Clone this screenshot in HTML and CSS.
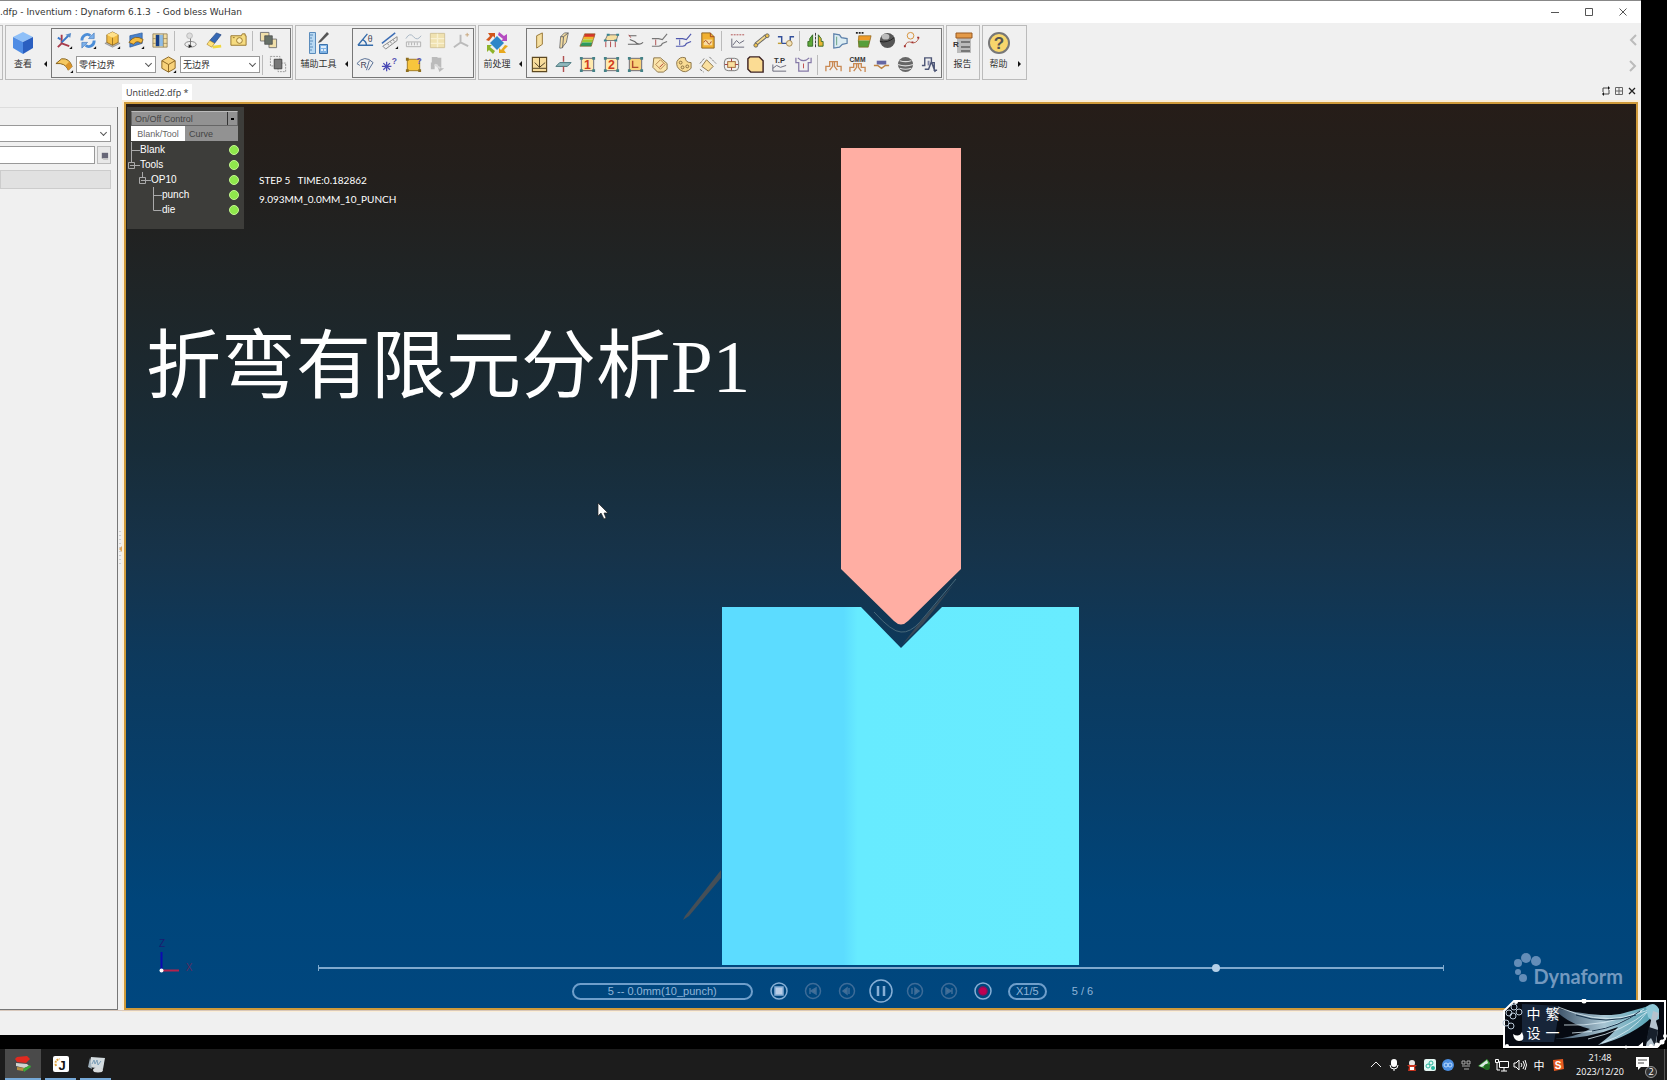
FILE: index.html
```html
<!DOCTYPE html>
<html lang="zh-CN">
<head>
    <meta charset="UTF-8">
    <meta name="viewport" content="width=device-width, initial-scale=1.0">
    <title>Inventium : Dynaform 6.1.3</title>
    <link rel="stylesheet" href="styles.css">
</head>
<body>
    <div class="window">
        <header class="titlebar">
            <span class="title">.dfp - Inventium : Dynaform 6.1.3 &nbsp;- God bless WuHan</span>
            <div class="window-buttons">
                <button aria-label="Minimize"><svg viewBox="0 0 10 10"><path d="M1 5.5h8" stroke="#555"/></svg></button>
                <button aria-label="Maximize"><svg viewBox="0 0 10 10"><path d="M1.5 1.5h7v7h-7z" stroke="#555"/></svg></button>
                <button aria-label="Close"><svg viewBox="0 0 10 10"><path d="M1.5 1.5l7 7m0-7l-7 7" stroke="#555"/></svg></button>
            </div>
        </header>

        <div class="toolbar">
            <section class="group group-cut"></section>

            <!-- view -->
            <section class="group">
                <button class="big-button">
                    <svg viewBox="0 0 24 24"><path d="M12 1l10 5-10 5L2 6z" fill="#8fc0f8"/><path d="M2 6l10 5v12L2 17z" fill="#4f8ce4"/><path d="M22 6l-10 5v12l10-6z" fill="#2a5fc0"/></svg>
                    查看
                </button>
                <button class="arrow arrow-left" aria-label="Collapse"></button>
                <div class="box">
                    <div class="icon-row">
                        <button class="icon" aria-label="Orientation"><svg viewBox="0 0 20 20"><path d="M7 4v9l-4 4M7 13l8 3" stroke="#a83c4c" stroke-width="2"/><path d="M7 12l7-7M3 7l3 2" stroke="#3a78c8" stroke-width="2"/><path d="M11 4l6-2-1 5z" fill="#5a8cc8"/><path d="M18 19v-3l-3 3z" fill="#111"/></svg></button>
                        <button class="icon" aria-label="Rotate"><svg viewBox="0 0 20 20"><path d="M3 10c0-6 6-8 9-5M16 10c0 6-6 8-9 5" stroke="#4c8ed8" stroke-width="3"/><path d="M10 8h6V2zM9 12H3v6z" fill="#7db2ec" stroke="#2c68b4" stroke-width=".6"/><path d="M18 19v-3l-3 3z" fill="#111"/></svg></button>
                        <button class="icon" aria-label="Solid view"><svg viewBox="0 0 20 20"><path d="M2 13l7-3 9 3-8 4z" fill="#b8b8b8" stroke="#777" stroke-width=".6"/><path d="M10 1l6 3v8l-6 3-6-3V4z" fill="#f2bd45" stroke="#85601a" stroke-width=".8"/><path d="M4 4l6 3 6-3-6-3z" fill="#ffe18a"/><path d="M10 7v8" stroke="#85601a" stroke-width=".8"/><path d="M18 19v-3l-3 3z" fill="#111"/></svg></button>
                        <button class="icon" aria-label="Section"><svg viewBox="0 0 20 20"><path d="M3 5l13-3v11L3 17z" fill="#4a83cc" stroke="#24549a" stroke-width=".7"/><path d="M2 12q6-9 15-3l-2 4q-5-4-8 1z" fill="#f6bd42" stroke="#7c5414" stroke-width=".8"/><path d="M18 19v-3l-3 3z" fill="#111"/></svg></button>
                        <button class="icon" aria-label="Shading"><svg viewBox="0 0 20 20"><path d="M2 3h15v14H2z" fill="#f2dca0" stroke="#8a7850" stroke-width=".8"/><path d="M5 4h4v12H5z" fill="#173f86"/><path d="M9 4h4v12H9z" fill="#8ebce6"/><path d="M2 8h3M2 13h3M13 8h4M13 13h4M13 3v14" stroke="#8a7850" stroke-width=".7"/></svg></button>
                        <span class="sep"></span>
                        <button class="icon" aria-label="Locate"><svg viewBox="0 0 20 20"><ellipse cx="10" cy="14" rx="6" ry="3" stroke="#888"/><circle cx="9" cy="5" r="3" fill="#ddd" stroke="#bbb"/><path d="M10 8v7" stroke="#777"/><path d="M8 14l4 2-4 2z" fill="#222"/></svg></button>
                        <button class="icon" aria-label="Erase"><svg viewBox="0 0 20 20"><path d="M8 17l9-1" stroke="#f0d840" stroke-width="3"/><path d="M12 2l5 2-7 9-5-3z" fill="#3568b4" stroke="#1f417c" stroke-width=".7"/><path d="M5 10l5 3-3 4-5-3z" fill="#ffe27a" stroke="#a07820" stroke-width=".6"/></svg></button>
                        <button class="icon" aria-label="Snapshot"><svg viewBox="0 0 20 20"><path d="M2 5h11l1-2h3v2h1v10H2z" fill="#f6dc80" stroke="#98762c"/><circle cx="11" cy="10" r="3" fill="#fff0b8" stroke="#98762c"/><path d="M4 7h2" stroke="#98762c"/></svg></button>
                        <span class="sep"></span>
                        <button class="icon" aria-label="Layers"><svg viewBox="0 0 20 20"><path d="M1.500 1.500h9v9h-9z" fill="#f0dfaa" stroke="#777"/><path d="M10.500 8.500h8v9h-8z" fill="#f0dfaa" stroke="#777"/><path d="M6 5h8v9H6z" fill="#667067" stroke="#444" stroke-width=".7"/></svg></button>
                    </div>
                    <div class="icon-row">
                        <button class="icon" aria-label="Surface"><svg viewBox="0 0 20 20"><path d="M1 9l6-5q8-1 11 8l-4 4q-3-8-13-7z" fill="#f5c860" stroke="#85601a"/><path d="M18 12l-4 4q-1-3-3-5l4-4z" fill="#dc9428"/><path d="M19 19v-3l-3 3z" fill="#111"/></svg></button>
                        <label class="combo"><select aria-label="Part boundary"><option>零件边界</option></select></label>
                        <button class="icon" aria-label="Wire box"><svg viewBox="0 0 20 20"><path d="M10 2l7 4v8l-7 4-7-4V6z" fill="#f8d27a" stroke="#8a6420"/><path d="M3 6l7 4 7-4M10 10v8" stroke="#8a6420"/><path d="M18 19v-3l-3 3z" fill="#111"/></svg></button>
                        <label class="combo"><select aria-label="Boundary"><option>无边界</option></select></label>
                        <span class="sep"></span>
                        <button class="icon" aria-label="Hidden layers"><svg viewBox="0 0 20 20"><path d="M1.500 1.500h10v10h-10zM9.500 8.500h8v9h-8z" stroke="#999" stroke-dasharray="2 1"/><path d="M5.500 4.500h8v10h-8z" fill="#777" stroke="#444"/></svg></button>
                    </div>
                </div>
            </section>

            <!-- auxiliary tools -->
            <section class="group">
                <button class="big-button big-wide">
                    <svg viewBox="0 0 24 24"><path d="M2.500 1.500h6v21h-6z" fill="#b8d8f2" stroke="#5b8cbc"/><path d="M3 4h3M3 7h2M3 10h3M3 13h2M3 16h3M3 19h2" stroke="#5b8cbc"/><path d="M12 10l8-9 2 2-8 8-3 1z" fill="#555"/><path d="M12.500 13.500h8v9h-8z" fill="#7eb2e4" stroke="#3c72ac"/><path d="M14 16h5M14 19h2m1 0h2" stroke="#fff" stroke-width="1.500"/></svg>
                    辅助工具
                </button>
                <button class="arrow arrow-left" aria-label="Collapse"></button>
                <div class="box">
                    <div class="icon-row">
                        <button class="icon" aria-label="Angle"><svg viewBox="0 0 20 20"><path d="M2 15L12 3M2 15h16M7 9q4 2 4 6" stroke="#356cab" stroke-width="1.400"/><text x="15" y="12" class="mark">θ</text></svg></button>
                        <button class="icon" aria-label="Distance"><svg viewBox="0 0 20 20"><path d="M2 13L16 2" stroke="#3b6cb4" stroke-width="1.500"/><path d="M3 16L18 6v4L6 19z" stroke="#888"/><path d="M8 13l1 2m2-4l1 2m2-4l1 2" stroke="#888"/><path d="M19 19v-3l-3 3z" fill="#111"/></svg></button>
                        <button class="icon dim" aria-label="Curve length"><svg viewBox="0 0 20 20"><path d="M2 8q4-7 8-2t8-1" stroke="#7890a8"/><path d="M2.500 11.500h15v5h-15z" stroke="#888"/><path d="M5 12v3m3-3v3m3-3v3m3-3v3" stroke="#888"/></svg></button>
                        <button class="icon dim" aria-label="Area"><svg viewBox="0 0 20 20"><path d="M2.500 2.500h15v15h-15z" fill="#f0d988" stroke="#c0a860"/><path d="M10 3v14M3 8h14M3 13h14" stroke="#fff2c0" stroke-width="1.500"/></svg></button>
                        <button class="icon dim" aria-label="Axis"><svg viewBox="0 0 20 20"><path d="M9 4v8l-7 5M9 12l8 4" stroke="#999" stroke-width="2"/><path d="M14 4h4m-2-2v4" stroke="#b07830"/></svg></button>
                    </div>
                    <div class="icon-row">
                        <button class="icon" aria-label="Radius"><svg viewBox="0 0 20 20"><path d="M1 9q8-10 17-1M1 9l3 2M13 16l5-8" stroke="#536b91"/><path d="M11 16l3-10" stroke="#536b91"/><text x="8" y="14" class="mark">R</text></svg></button>
                        <button class="icon" aria-label="Node query"><svg viewBox="0 0 20 20"><path d="M7 7v10M2 12h10M3.500 8.500l7 7m0-7l-7 7" stroke="#4949b5" stroke-width="1.300"/><text x="15" y="9" class="mark mark-blue">?</text></svg></button>
                        <button class="icon" aria-label="Element query"><svg viewBox="0 0 20 20"><path d="M3.500 4.500h13v12h-13z" fill="#f8c53c" stroke="#a07820"/><path d="M2 3h3v3H2zm0 12h3v3H2zm13 0h3v3h-3z" fill="#8e6f20"/><text x="16" y="9" class="mark mark-blue">?</text></svg></button>
                        <button class="icon dim" aria-label="Part query"><svg viewBox="0 0 20 20"><path d="M4 2h6v8H7v5H3V8h1zM10 3h4v11h3l-5 4-2-6z" fill="#999"/><path d="M7 10l6 4" stroke="#ccc" stroke-width="2"/></svg></button>
                    </div>
                </div>
            </section>

            <!-- pre-processing -->
            <section class="group">
                <button class="big-button big-mid">
                    <svg viewBox="0 0 24 24"><path d="M12 5l7 7-7 7-7-7z" fill="#2e86c8"/><path d="M1 9l4-4-2-3h7v5L8 5 4 10z" fill="#d2561c"/><path d="M14 1l5 4 3-2v7h-6l2-2-5-4z" fill="#b54cc0"/><path d="M23 15l-4 4 2 3h-7v-5l2 2 4-5z" fill="#e8a91e"/><path d="M2 21v-7h5l-2 2 5 4-2 3-4-4z" fill="#8eb32a"/></svg>
                    前处理
                </button>
                <button class="arrow arrow-left" aria-label="Collapse"></button>
                <div class="box">
                    <div class="icon-row">
                        <button class="icon" aria-label="Sheet"><svg viewBox="0 0 20 20"><path d="M7 5l6-3v12l-6 4z" fill="#f6dfa0" stroke="#967535"/></svg></button>
                        <button class="icon" aria-label="Bend sheet"><svg viewBox="0 0 20 20"><path d="M7 6l4-4h4l-2 10-5 6H6z" fill="#f3dba0" stroke="#777"/><path d="M7 6h3l-1 12M10 6l5-4" stroke="#666"/></svg></button>
                        <button class="icon" aria-label="Contour"><svg viewBox="0 0 20 20"><path d="M7 3h11l-1 4H6z" fill="#d9342b"/><path d="M6 6h11l-1 3H5z" fill="#f0b32c"/><path d="M5 9h11l-1 3H4z" fill="#9acb36"/><path d="M4 12h11l-1 4H2z" fill="#2c9a60"/><path d="M7 3h11l-4 13H2z" stroke="#8b5a20" stroke-width=".7"/></svg></button>
                        <button class="icon" aria-label="Mesh points"><svg viewBox="0 0 20 20"><path d="M6 4h11l-2 6H3z" fill="#f6dfa0" stroke="#777"/><path d="M4 11v6m5-6v6m5-6v6" stroke="#b24848"/><path d="M5 3h3v2H5zm10 0h3v2h-3zM2 9h3v2H2zm11 0h3v2h-3z" fill="#37848e"/></svg></button>
                        <button class="icon" aria-label="Tipping"><svg viewBox="0 0 20 20"><path d="M3 5h8M4 9l5 2q4 5 9 1M2 14h12" stroke="#666" stroke-width="1.200"/><path d="M3 4l2 3" stroke="#b24848"/></svg></button>
                        <button class="icon" aria-label="Draw curve"><svg viewBox="0 0 20 20"><path d="M2 8h7l4 1 5-6M2 16h7q3 0 4-3l5-2" stroke="#777" stroke-width="1.200"/><path d="M6 9v6" stroke="#b05050"/></svg></button>
                        <button class="icon" aria-label="Blank curve"><svg viewBox="0 0 20 20"><path d="M2 8h7l4 1 5-6M2 16h7q3 0 4-3l5-2" stroke="#4f58ae" stroke-width="1.200"/><path d="M6 9v6" stroke="#4f58ae"/></svg></button>
                        <button class="icon" aria-label="Report file"><svg viewBox="0 0 20 20"><path d="M4 2h9l4 4v12H4z" fill="#f0b030" stroke="#8c6420"/><path d="M6 9h9v6H6z" fill="#f8dca0"/><path d="M13 2v4h4M6 12q2-4 4 0t4-1" stroke="#a54420"/></svg></button>
                        <span class="sep"></span>
                        <button class="icon" aria-label="Forming window"><svg viewBox="0 0 20 20"><path d="M3 4h15" stroke="#b05050" stroke-dasharray="2 1"/><path d="M4 8v9h13M5 15l4-5 3 3 5-3" stroke="#667"/></svg></button>
                        <button class="icon" aria-label="Link"><svg viewBox="0 0 20 20"><path d="M4 14L15 5" stroke="#666" stroke-width="4"/><path d="M4 14L15 5" stroke="#f3d88a" stroke-width="2"/><circle cx="4" cy="15" r="2" fill="#f0c24a" stroke="#666"/><circle cx="16" cy="5" r="2" fill="#f0c24a" stroke="#666"/></svg></button>
                        <button class="icon" aria-label="Drawbead"><svg viewBox="0 0 20 20"><path d="M2 6h4v7h9V6h4" stroke="#33509b" stroke-width="1.500"/><path d="M2 13h4" stroke="#c3a036" stroke-width="1.500"/><circle cx="14" cy="13" r="3" fill="#f3e3b8" stroke="#a88850"/></svg></button>
                        <span class="sep"></span>
                        <button class="icon" aria-label="Mirror"><svg viewBox="0 0 20 20"><path d="M2 16v-5h2V8l3-4v12z" fill="#5eaa39" stroke="#376b26"/><path d="M18 16v-5h-2V8l-3-4v12z" fill="#e9b734" stroke="#376b26"/><path d="M10 2v16" stroke="#333" stroke-dasharray="3 1"/></svg></button>
                        <button class="icon" aria-label="Fill"><svg viewBox="0 0 20 20"><path d="M4 3l6 1 2 3 6 1v5l-5 1-3 3-6 1z" fill="#dcecf2" stroke="#5c80aa" stroke-width="1.300"/><path d="M7 6v9" stroke="#65a080"/></svg></button>
                        <button class="icon" aria-label="Thickness"><svg viewBox="0 0 20 20"><path d="M2 2h9" stroke="#222" stroke-width="2" stroke-dasharray="2 1"/><path d="M5 5h13l-1 5H4z" fill="#ef9b28"/><path d="M4 10h13l-2 7H5z" fill="#579e3a"/><path d="M5 5h13l-3 12H5z" stroke="#856020" stroke-width=".7"/></svg></button>
                        <button class="icon" aria-label="Sphere"><svg viewBox="0 0 20 20"><circle cx="10" cy="10" r="8" fill="#555"/><ellipse cx="8" cy="6" rx="4" ry="3" fill="#bbb"/><path d="M2 11q8 2 15-4" stroke="#222"/></svg></button>
                        <button class="icon" aria-label="Trajectory"><svg viewBox="0 0 20 20"><circle cx="9" cy="5" r="3.500" stroke="#d69038"/><path d="M3 16q2-6 7-4t8-5" stroke="#b05d48"/><path d="M2 15h2v2H2zm8-4h2v2h-2zm6-5h2v2h-2z" fill="#a43030"/></svg></button>
                    </div>
                    <div class="icon-row">
                        <button class="icon" aria-label="Project"><svg viewBox="0 0 20 20"><path d="M2.500 2.500h15v15h-15z" fill="#f7dc9b" stroke="#5d4820" stroke-width="1.200"/><path d="M3 14h14M10 3v10M5 8l5 5 6-5" stroke="#4b3b20"/></svg></button>
                        <button class="icon" aria-label="Plane"><svg viewBox="0 0 20 20"><path d="M2 12l4-4h12l-4 4z" fill="#90b8bd" stroke="#46747a"/><path d="M10 1v6m0 5v6" stroke="#b05050" stroke-width="1.500"/></svg></button>
                        <button class="icon" aria-label="Step one"><svg viewBox="0 0 20 20"><path d="M3.500 3.500h13v13h-13z" fill="#ffe9ad" stroke="#667"/><path d="M2 2h3v3H2zm13 0h3v3h-3zM2 15h3v3H2zm13 0h3v3h-3z" fill="#448287"/><text x="10" y="15" class="digit">1</text></svg></button>
                        <button class="icon" aria-label="Step two"><svg viewBox="0 0 20 20"><path d="M3.500 3.500h13v13h-13z" fill="#ffe9ad" stroke="#667"/><path d="M2 2h3v3H2zm13 0h3v3h-3zM2 15h3v3H2zm13 0h3v3h-3z" fill="#448287"/><text x="10" y="15" class="digit">2</text></svg></button>
                        <button class="icon" aria-label="Local axis"><svg viewBox="0 0 20 20"><path d="M3.500 3.500h13v13h-13z" fill="#f9d278" stroke="#667"/><path d="M2 2h3v3H2zm13 0h3v3h-3zM2 15h3v3H2zm13 0h3v3h-3z" fill="#448287"/><path d="M7 6v7h6" stroke="#b04a2c" stroke-width="1.500"/></svg></button>
                        <button class="icon" aria-label="Outline"><svg viewBox="0 0 20 20"><path d="M4 3h7l7 6v6l-4 3H8l-5-5z" fill="#fae4aa" stroke="#8b7448"/><path d="M6 10l5-5 5 5-5 5z" stroke="#b58550"/><path d="M10 13l4-4" stroke="#b03c30"/></svg></button>
                        <button class="icon" aria-label="Holes"><svg viewBox="0 0 20 20"><path d="M3 7q3-6 9-4 0 5 6 5v6q-6 6-11 2-5-3-4-9z" fill="#f8db93" stroke="#8b7448"/><circle cx="7" cy="8" r="1.500" stroke="#876c3c"/><circle cx="9" cy="13" r="1.500" stroke="#876c3c"/><circle cx="14" cy="12" r="1.500" stroke="#876c3c"/></svg></button>
                        <button class="icon" aria-label="Trim"><svg viewBox="0 0 20 20"><path d="M9 5l7 7-5 5-7-5z" fill="#fae0a0" stroke="#8b7448"/><path d="M2 9l5-6m5-1l7 7M2 15l4 3" stroke="#777" stroke-dasharray="3 1"/></svg></button>
                        <button class="icon" aria-label="Offset"><svg viewBox="0 0 20 20"><rect x="2.500" y="3.500" width="15" height="13" rx="4" stroke="#777"/><rect x="6" y="7" width="8" height="6" fill="#fae0a0" stroke="#a06838"/><path d="M10 4v3m0 6v3M3 10h3m8 0h3" stroke="#a03c3c"/></svg></button>
                        <button class="icon" aria-label="Blank outline"><svg viewBox="0 0 20 20"><path d="M4 2h10l4 4v12H5l-3-3V4z" fill="#fbdc94" stroke="#3c2222" stroke-width="1.500"/></svg></button>
                        <button class="icon" aria-label="Trim path"><svg viewBox="0 0 20 20"><text x="10" y="8" class="caps">T.P</text><path d="M3 10v7h14M3 14l4-3 4 2 6-2" stroke="#667"/></svg></button>
                        <button class="icon" aria-label="Springback"><svg viewBox="0 0 20 20"><path d="M2 3v5h3v9h10V8h3V3M4 3q6 6 12 0" stroke="#8579a7" stroke-width="1.300"/><path d="M10 9v5" stroke="#bf4b4b"/></svg></button>
                        <span class="sep"></span>
                        <button class="icon" aria-label="Tool offset"><svg viewBox="0 0 20 20"><path d="M2 17v-5h4V7h8v5h4v5M6 16l3-4v-5m2 0v5l3 4" stroke="#c98953" stroke-width="1.400"/></svg></button>
                        <button class="icon" aria-label="CMM"><svg viewBox="0 0 20 20"><text x="10" y="7" class="caps caps-small">CMM</text><path d="M2 18v-5h4V9h8v4h4v5M6 17l3-4V9m2 0v4l3 4" stroke="#c98953" stroke-width="1.400"/></svg></button>
                        <button class="icon" aria-label="Press"><svg viewBox="0 0 20 20"><path d="M5 6h10v4H5z" fill="#6667a3"/><path d="M2 11h4l4 3 4-3h4" stroke="#be8342" stroke-width="1.500"/></svg></button>
                        <button class="icon" aria-label="Zebra"><svg viewBox="0 0 20 20"><circle cx="10" cy="10" r="8" fill="#666"/><path d="M4 6q6 2 12 0M2 10q8 3 16 0M4 14q6 2 12 0" stroke="#ddd" stroke-width="1.200"/></svg></button>
                        <button class="icon" aria-label="Analysis"><svg viewBox="0 0 20 20"><path d="M2 11h3V3h7v5h3v8h3M5 15h4l3-8 4 11" stroke="#4d5676" stroke-width="1.500"/><path d="M8 6h2v5H8z" fill="#8085a5"/></svg></button>
                    </div>
                </div>
            </section>

            <!-- report -->
            <section class="group">
                <button class="big-button big-slim">
                    <svg viewBox="0 0 24 24"><path d="M6 3h14v19H6z" fill="#bbb"/><path d="M5 2h16v5H5z" fill="#e49a48" stroke="#995b22"/><path d="M10 11h9M10 16h9M10 20h9" stroke="#777" stroke-width="2"/><text x="5" y="16" class="caps">R</text></svg>
                    报告
                </button>
            </section>

            <!-- help -->
            <section class="group">
                <button class="big-button big-slim">
                    <svg viewBox="0 0 24 24"><circle cx="12" cy="12" r="10" fill="#f8d66c" stroke="#777" stroke-width="2"/><text x="12" y="18" class="help-mark">?</text></svg>
                    帮助
                </button>
                <button class="arrow arrow-right" aria-label="Expand"></button>
            </section>

            <div class="toolbar-scroll">
                <button aria-label="Scroll left"><svg viewBox="0 0 10 12"><path d="M8 1L3 6l5 5" stroke="#bbb" stroke-width="2"/></svg></button>
                <button aria-label="Scroll right"><svg viewBox="0 0 10 12"><path d="M2 1l5 5-5 5" stroke="#bbb" stroke-width="2"/></svg></button>
            </div>
        </div>

        <div class="tabbar">
            <button class="tab">Untitled2.dfp *</button>
            <div class="tab-tools">
                <button aria-label="Swap view"><svg viewBox="0 0 10 10"><path d="M2 6V2h6M8 4v4H2" stroke="#444"/><path d="M7 0l2 2-2 2zM3 6L1 8l2 2z" fill="#111"/></svg></button>
                <button aria-label="Tile"><svg viewBox="0 0 10 10"><path d="M1.500 1.500h7v7h-7zM5 1v8M1 5h8" stroke="#666"/></svg></button>
                <button aria-label="Close tab"><svg viewBox="0 0 10 10"><path d="M2 2l6 6m0-6L2 8" stroke="#222" stroke-width="1.300"/></svg></button>
            </div>
        </div>

        <main class="workspace">
            <aside class="side-panel">
                <label class="combo side-combo"><select aria-label="Category"><option></option></select></label>
                <div class="side-search">
                    <input type="text" aria-label="Filter">
                    <button aria-label="Pick"><svg viewBox="0 0 10 10"><path d="M2 2h7v6H2z" fill="#667"/><path d="M2 8l2 1h5" stroke="#aaa"/></svg></button>
                </div>
                <div class="side-header"></div>
            </aside>
            <div class="splitter"><svg viewBox="0 0 6 40"><path d="M2 2v36M5 4v34" stroke="#aaa" stroke-dasharray="1 3"/><path d="M5 16v8L1 20z" fill="#e0a860"/></svg></div>

            <div class="viewport">
                <svg class="scene" viewBox="0 0 1510 904">
                    <defs>
                        <linearGradient id="die-shade">
                            <stop offset=".34" stop-color="#5cdcff"/>
                            <stop offset=".38" stop-color="#67ebff"/>
                            <stop offset="1" stop-color="#68ecff"/>
                        </linearGradient>
                    </defs>
                    <!-- sheet metal part -->
                    <path d="M595 766l-36 46-2 4 6-4 32-38z" fill="#454f57"/>
                    <!-- die and punch -->
                    <path d="M596 503h139l40 41 41-41h137v358H596z" fill="url(#die-shade)"/>
                    <path d="M715 44h120v421l-53 52q-7 7-14 0l-53-52z" fill="#ffaea3"/>
                    <path d="M748 508q18 20 27 20 9 1 19-10l36-43" stroke="#47687a"/>
                    <path d="M776 541l18-23 34-38-31 40z" fill="#394957"/>
                    <!-- mouse pointer -->
                    <path d="M472 399v13l3-3 3 6 2-1-2-5h4z" fill="#fff" stroke="#222" stroke-width=".7"/>
                </svg>

                <div class="hud">
                    <div class="hud-top">
                        <div class="control-panel">
                            <div class="control-title"><select aria-label="Panel"><option>On/Off Control</option></select></div>
                            <div class="control-tabs">
                                <button class="active">Blank/Tool</button>
                                <button>Curve</button>
                            </div>
                            <ul class="tree">
                                <li><svg width="12" height="15"><path d="M3.500 0v15M4 8.500h8"/></svg>Blank<button class="dot" aria-label="Toggle Blank"></button></li>
                                <li><svg width="12" height="15"><path d="M3.500 0v5M.500 5.500h6v6h-6zM2 8.500h10"/></svg>Tools<button class="dot" aria-label="Toggle Tools"></button></li>
                                <li><svg width="23" height="15"><path d="M14.500 0v5M11.500 5.500h6v6h-6zM13 8.500h10"/></svg>OP10<button class="dot" aria-label="Toggle OP10"></button></li>
                                <li><svg width="34" height="15"><path d="M25.500 0v15M26 8.500h8"/></svg>punch<button class="dot" aria-label="Toggle punch"></button></li>
                                <li><svg width="34" height="15"><path d="M25.500 0v8.500h8"/></svg>die<button class="dot" aria-label="Toggle die"></button></li>
                            </ul>
                        </div>
                        <div class="step-info">
                            <p>STEP 5 &nbsp; TIME:0.182862</p>
                            <p>9.093MM_0.0MM_10_PUNCH</p>
                        </div>
                    </div>

                    <h1 class="caption">折弯有限元分析P1</h1>

                    <div class="hud-bottom">
                        <svg class="triad" viewBox="0 0 40 36"><text x="7" y="9" class="axis-z">Z</text><path d="M6.500 14v18" stroke="#0b0bb0" stroke-width="2"/><path d="M8 32.500h16" stroke="#b4224c" stroke-width="2"/><text x="34" y="33" class="axis-x">X</text><circle cx="6.500" cy="32.500" r="2" fill="#fff"/></svg>
                        <div class="player">
                            <input type="range" class="timeline" min="1" max="6" value="5" aria-label="Step">
                            <div class="player-buttons">
                                <button class="pill pill-name">5 -- 0.0mm(10_punch)</button>
                                <button class="round" aria-label="Stop"><svg viewBox="0 0 18 18"><circle cx="9" cy="9" r="8"/><path d="M5 5h8v8H5z" fill="#b9cde6"/></svg></button>
                                <button class="round faded" aria-label="First"><svg viewBox="0 0 18 18"><circle cx="9" cy="9" r="7.500"/><path d="M6 6v6m1-3l5-3v6z" fill="#4a7296"/></svg></button>
                                <button class="round faded" aria-label="Previous"><svg viewBox="0 0 18 18"><circle cx="9" cy="9" r="7.500"/><path d="M5 9l4-3v6zm6-3v6" fill="#4a7296"/></svg></button>
                                <button class="round play" aria-label="Pause"><svg viewBox="0 0 24 24"><circle cx="12" cy="12" r="11"/><path d="M9 7v10m6-10v10" stroke-width="2.500"/></svg></button>
                                <button class="round faded" aria-label="Next"><svg viewBox="0 0 18 18"><circle cx="9" cy="9" r="7.500"/><path d="M13 9L9 6v6zM6 6v6" fill="#4a7296"/></svg></button>
                                <button class="round faded" aria-label="Last"><svg viewBox="0 0 18 18"><circle cx="9" cy="9" r="7.500"/><path d="M12 6v6m-1-3L6 6v6z" fill="#4a7296"/></svg></button>
                                <button class="round" aria-label="Record"><svg viewBox="0 0 18 18"><circle cx="9" cy="9" r="8"/><circle cx="9" cy="9" r="4" fill="#c00052" stroke="#8c1058"/></svg></button>
                                <button class="pill pill-speed">X1/5</button>
                                <span class="frame">5 / 6</span>
                            </div>
                        </div>
                        <div class="brand">
                            <svg viewBox="0 0 28 30"><circle cx="12" cy="5" r="5"/><circle cx="22" cy="8" r="5"/><circle cx="4" cy="10" r="4"/><circle cx="4" cy="19" r="3"/><circle cx="9" cy="25" r="4"/></svg>
                            <span>Dynaform</span>
                        </div>
                    </div>
                </div>
            </div>
        </main>
        <footer class="statusbar"></footer>
    </div>

    <div class="ime">
        <svg viewBox="0 0 165 50">
            <defs>
                <linearGradient id="hair"><stop offset="0" stop-color="#32475e"/><stop offset=".5" stop-color="#a7c4d2"/><stop offset="1" stop-color="#4fa2b4"/></linearGradient>
            </defs>
            <path d="M12 2h151v38l-8 8H2V12z" fill="#060a12" stroke="#fff" stroke-width="2"/>
            <path d="M20 5l38 2-6 36H20z" fill="#20304a" opacity=".7"/>
            <path d="M50 8q50 12 72 6t28-8l4 8q-20 22-58 32 14-10 20-18-30 12-64 12 22-2 36-10-24-6-38-22z" fill="url(#hair)"/>
            <path d="M56 8q38 16 66 10t30-12M70 34q38 0 72-24M86 40q36-8 60-28M62 26q40 2 78-14M100 44q30-10 46-32" stroke="#dcecf4" stroke-width=".8"/>
            <path d="M74 16q30 10 60 0M90 32q28-4 48-20" stroke="#17324a"/>
            <path d="M144 8q8-7 13 2v10l-6 3-5-5z" fill="#8fc8d8"/>
            <path d="M151 12l6 2-3 8 2 7-2 18h-10l3-16z" fill="#b5c3ce"/>
            <path d="M147 28l-3 16 5-5 4 8 3-16z" fill="#17202c"/>
            <g stroke="#b7c7d6"><circle cx="12" cy="8" r="3"/><circle cx="7" cy="14" r="3"/><circle cx="17" cy="13" r="3"/><circle cx="11" cy="17" r="3"/><circle cx="4" cy="24" r="3"/><circle cx="9" cy="27" r="3"/></g>
            <path d="M11 35q6 4 9-2 4 9-3 9-5 0-6-7z" fill="#fff"/>
            <g fill="#fff"><circle cx="82" cy="2" r="2.500"/><circle cx="14" cy="3" r="2"/><circle cx="5" cy="47" r="2"/><circle cx="155" cy="46" r="2.500"/><circle cx="160" cy="43" r="2.500"/><circle cx="163" cy="37" r="2"/><circle cx="149" cy="47" r="2"/><circle cx="124" cy="48" r="1.500"/><path d="M134 49l7-6v6z"/></g>
        </svg>
        <div class="ime-keys">
            <button>中</button><button>繁</button>
            <button>设</button><button>一</button>
        </div>
    </div>

    <nav class="taskbar">
        <button class="task active" aria-label="Dynaform"><svg viewBox="0 0 18 18"><path d="M3 2l10-1 3 3-4 4-9-1-2-3z" fill="#e02a20"/><path d="M2 8l11 1 2 2-5 2-8-2z" fill="#d0d4d0"/><path d="M3 12l8 1-2 3-6-1z" fill="#b58c42"/><path d="M9 14l7-4 1 2-7 5z" fill="#38a838"/></svg></button>
        <button class="task" aria-label="Jump"><svg viewBox="0 0 18 18"><rect x="1" y="1" width="16" height="16" rx="2" fill="#fff"/><text x="10" y="15" class="task-letter">J</text><path d="M4 11q-2-6 4-7" stroke="#e1a33c" stroke-width="2" stroke-dasharray="2 1"/></svg></button>
        <button class="task" aria-label="Monitor"><svg viewBox="0 0 18 18"><path d="M4 2l14 1-2 11-14-2z" fill="#d4dce0"/><path d="M5 9l2-4 1 4 2-4 1 5 3-4" stroke="#7d9fb8"/><ellipse cx="11" cy="15" rx="5" ry="2.500" fill="#d8dcde"/><path d="M3 3l-2 9 4 2z" fill="#9eb0bc"/></svg></button>

        <div class="tray">
            <button aria-label="More"><svg viewBox="0 0 14 14"><path d="M2 9l5-5 5 5" stroke="#eee"/></svg></button>
            <button aria-label="Microphone"><svg viewBox="0 0 14 14"><rect x="4" y="1" width="6" height="8" rx="3" fill="#fff"/><path d="M3 7q0 4 4 4t4-4M7 11v2" stroke="#fff"/></svg></button>
            <button aria-label="Messenger"><svg viewBox="0 0 14 14"><circle cx="7" cy="5" r="3" fill="#e8e8e8"/><path d="M2 7h10l-2 2 1 4H3l1-4z" fill="#c8341f"/><path d="M5 9h4v3H5z" fill="#fff"/></svg></button>
            <button aria-label="Share"><svg viewBox="0 0 14 14"><rect x="1" y="1" width="12" height="12" rx="2" fill="#e4f6f3"/><circle cx="5" cy="8" r="2" stroke="#26b49c"/><circle cx="8" cy="5" r="2" stroke="#26b49c"/><circle cx="10" cy="10" r="2" fill="#26b49c"/></svg></button>
            <button aria-label="Bluetooth"><svg viewBox="0 0 14 14"><circle cx="7" cy="7" r="6" fill="#4b8ee0"/><circle cx="5" cy="7" r="2" stroke="#b9d9ff"/><circle cx="9" cy="7" r="2" stroke="#b9d9ff"/></svg></button>
            <button aria-label="Keyboard"><svg viewBox="0 0 14 14"><path d="M3 3h3v3H3zm5 0h3v3H8zM3 8h8M5 11h5" stroke="#aaa"/></svg></button>
            <button aria-label="Download"><svg viewBox="0 0 14 14"><path d="M1 8l9-7 3 4-2 7-5-2z" fill="#3aa238"/><path d="M2 8l8-6 1 3-6 4z" fill="#dce8e4"/><circle cx="10" cy="9" r="3" fill="#206820"/></svg></button>
            <button aria-label="Network"><svg viewBox="0 0 14 14"><path d="M4.500 3.500h9v6h-9zM9 10v3m-3 0h6M.500 1.500h3v3h-3zM2 5v7h3" stroke="#fff"/></svg></button>
            <button aria-label="Volume"><svg viewBox="0 0 14 14"><path d="M1 5h2l3-3v10L3 9H1zM8 5q2 2 0 4M10 3q3 4 0 8M12 2q3 5 0 10" stroke="#fff"/></svg></button>
            <button class="lang">中</button>
            <button aria-label="Sogou"><svg viewBox="0 0 14 14"><path d="M2 2l10-1 1 10-10 2z" fill="#e65a20"/><text x="7" y="11" class="tray-letter">S</text></svg></button>
            <button class="clock"><span>21:48</span><span>2023/12/20</span></button>
            <button class="notice" aria-label="Notifications"><svg viewBox="0 0 20 20"><path d="M1 2h13v10H6l-3 3v-3H1z" fill="#fff"/><path d="M3 5h9M3 8h6" stroke="#444"/></svg><span>2</span></button>
        </div>
    </nav>
</body>
</html>
```
FILE: styles.css
```css
* {
    box-sizing: border-box;
}
body {
    margin: 0;
    height: 100vh;
    display: flex;
    flex-direction: column;
    overflow: hidden;
    background-color: #000;
    font-family: "Open Sans", "Noto Sans CJK SC", sans-serif;
    font-size: 9px;
    color: #333;
}
button, select, input {
    font: inherit;
    color: inherit;
    margin: 0;
    padding: 0;
    border: none;
    background: none;
}
svg {
    display: block;
    fill: none;
}
p, h1, ul {
    margin: 0;
    padding: 0;
}

/* window */
.window {
    flex: 1;
    min-height: 0;
    margin: 0 26px 14px 0;
    display: flex;
    flex-direction: column;
    background-color: #f0f0f0;
    border-top: 1px solid #888;
}
.titlebar {
    height: 21px;
    display: flex;
    align-items: center;
    justify-content: space-between;
    background-color: #fff;
}
.title {
    font-family: "DejaVu Sans", sans-serif;
    white-space: nowrap;
}
.window-buttons {
    display: flex;
    padding-right: 1px;
}
.window-buttons button {
    width: 34px;
    height: 21px;
    display: grid;
    place-items: center;
}
.window-buttons svg {
    width: 10px;
    height: 10px;
}

/* toolbar */
.toolbar {
    display: flex;
    gap: 2px;
    height: 60px;
    padding: 2px 3px 2px 0;
    border-top: 1px solid #fff;
}
.group {
    display: flex;
    align-items: center;
    border: 1px solid #bbb;
    padding-right: 1px;
}
.group-cut {
    width: 3px;
    border-left: none;
}
.big-button {
    width: 34px;
    display: flex;
    flex-direction: column;
    align-items: center;
    padding-bottom: 4px;
    line-height: 14px;
    white-space: nowrap;
}
.big-wide {
    width: 45px;
}
.big-mid {
    width: 36px;
}
.big-slim {
    width: 31px;
}
.big-button svg {
    width: 24px;
    height: 24px;
    margin-bottom: 2px;
}
.arrow {
    width: 11px;
    height: 16px;
    display: grid;
    place-items: center;
    margin-top: 22px;
}
.arrow::before {
    content: "";
    border: 3px solid transparent;
}
.arrow-left::before {
    border-right-color: #111;
    border-left: none;
}
.arrow-right::before {
    border-left-color: #111;
    border-right: none;
}
.box {
    border: 1px solid #777;
}
.icon-row {
    display: flex;
    align-items: center;
    height: 24px;
}
.icon {
    width: 24px;
    height: 24px;
    display: grid;
    place-items: center;
}
.icon svg {
    width: 19px;
    height: 19px;
}
.dim {
    opacity: 0.6;
}
.sep {
    width: 6px;
    height: 20px;
    background: linear-gradient(#bbb, #bbb) 2px 0 / 1px 100% no-repeat;
}
.digit {
    fill: #d23c1e;
    font: bold 13px "Liberation Sans", sans-serif;
    text-anchor: middle;
}
.caps {
    fill: #333;
    font: bold 8px "Liberation Sans", sans-serif;
    text-anchor: middle;
}
.caps-small {
    font-size: 7px;
}
.mark {
    fill: #445;
    font: 9px "Liberation Sans", sans-serif;
    text-anchor: middle;
}
.mark-blue {
    fill: #5b56b4;
    font-weight: bold;
}
.help-mark {
    fill: #555;
    font: bold 17px "Liberation Sans", sans-serif;
    text-anchor: middle;
}
.combo {
    position: relative;
    width: 80px;
    height: 17px;
}
.combo select {
    appearance: none;
    display: block;
    width: 100%;
    height: 100%;
    padding-left: 2px;
    border: 1px solid #999;
    background-color: #fff;
}
.combo::after {
    content: "";
    position: absolute;
    right: 5px;
    top: 5px;
    width: 4px;
    height: 4px;
    border: solid #555;
    border-width: 0 1px 1px 0;
    transform: rotate(45deg);
}
.toolbar-scroll {
    margin-left: auto;
    display: flex;
    flex-direction: column;
    justify-content: center;
    gap: 14px;
}
.toolbar-scroll svg {
    width: 10px;
    height: 12px;
}

/* document tabs */
.tabbar {
    height: 20px;
    display: flex;
    justify-content: space-between;
    align-items: flex-end;
    padding: 0 4px 0 122px;
}
.tab {
    height: 18px;
    padding: 0 4px 1px;
    background-color: #fff;
}
.tab-tools {
    display: flex;
    gap: 3px;
    padding-bottom: 6px;
}
.tab-tools svg {
    width: 10px;
    height: 10px;
}

/* left side */
.workspace {
    flex: 1;
    min-height: 0;
    display: flex;
    padding-right: 3px;
}
.side-panel {
    width: 118px;
    margin-top: 5px;
    padding: 8px 6px 0 0;
    border: solid #777;
    border-width: 0 1px 1px 0;
    box-shadow: inset 0 1px #ddd;
}
.side-combo {
    display: block;
    width: 100%;
    margin-top: 10px;
}
.side-combo select {
    border-left: none;
}
.side-search {
    display: flex;
    gap: 2px;
    margin: 4px 0 6px;
}
.side-search input {
    flex: 1;
    min-width: 0;
    height: 18px;
    border: 1px solid #999;
    border-left: none;
    background-color: #fff;
}
.side-search button {
    width: 14px;
    display: grid;
    place-items: center;
    border: 1px solid #bbb;
    background-color: #e8e8e8;
}
.side-search svg {
    width: 9px;
    height: 9px;
}
.side-header {
    height: 19px;
    border: 1px solid #ccc;
    background-color: #e1e1e1;
}
.splitter {
    width: 6px;
    display: flex;
    align-items: center;
    padding-bottom: 14px;
}
.splitter svg {
    width: 6px;
    height: 40px;
}
.statusbar {
    height: 25px;
    border-top: 1px solid #d8c8bc;
}

/* 3D viewport */
.viewport {
    flex: 1;
    min-width: 0;
    display: grid;
    grid-template: minmax(0, 1fr) / minmax(0, 1fr);
    border: 2px solid #cf9a3a;
    box-shadow: 0 0 0 2px #fbeed8;
    background: linear-gradient(#261d18 0%, #231f1c 8%, #1e2629 23%, #182c38 38%, #16334a 50%, #0d395c 61%, #063f6c 76%, #00457a 88%, #00477f 100%);
}
.scene, .hud {
    grid-area: 1 / 1;
}
.scene {
    width: 100%;
    height: 100%;
}
.hud {
    z-index: 1;
    display: flex;
    flex-direction: column;
    padding: 3px 0 5px;
}
.hud-top {
    display: flex;
    gap: 15px;
    padding-left: 1px;
}
.control-panel {
    width: 117px;
    height: 122px;
    padding: 4px 0 0 1px;
    background-color: #3d3d3a;
    font-family: "Liberation Sans", Arial, sans-serif;
}
.control-title, .control-tabs {
    height: 15px;
    margin: 0 6px 0 3px;
    background-color: #929292;
    color: #444;
}
.control-title {
    position: relative;
    border: 1px solid #666;
    border-top-color: #bbb;
}
.control-title select {
    appearance: none;
    display: block;
    width: 100%;
    height: 100%;
    padding-left: 3px;
}
.control-title::after {
    content: "";
    position: absolute;
    right: 0;
    top: 0;
    width: 9px;
    height: 13px;
    border-left: 1px solid #333;
    background: linear-gradient(#000, #000) center / 3px 2px no-repeat;
}
.control-tabs {
    display: flex;
}
.control-tabs button {
    padding: 0 4px;
}
.control-tabs .active {
    width: 54px;
    background-color: #fff;
    color: #666;
}
.tree {
    padding-top: 1px;
    list-style: none;
    color: #fff;
    font-size: 10px;
}
.tree li {
    display: flex;
    align-items: center;
    height: 15px;
    padding-right: 5px;
}
.tree svg {
    stroke: #aaa;
}
.dot {
    width: 10px;
    height: 10px;
    margin-left: auto;
    border: 1px solid #c4f890;
    border-radius: 50%;
    background-color: #8fe84c;
}
.step-info {
    padding-top: 64px;
    font: 10px/19px Lato, sans-serif;
    color: #fff;
}
.caption {
    margin: 83px 0 0 20px;
    font: 400 75px/110px "Liberation Serif", "Noto Sans CJK SC", serif;
    color: #fff;
    white-space: nowrap;
}
.hud-bottom {
    margin-top: auto;
    display: grid;
    grid-template-columns: 17fr 100fr 17fr;
    align-items: end;
}
.triad {
    width: 40px;
    height: 36px;
    margin: 0 0 29px 29px;
}
.axis-z, .axis-x {
    fill: #1c1c70;
    font: 10px "Liberation Sans", Arial, sans-serif;
    text-anchor: middle;
}
.axis-x {
    fill: #5a2c60;
}
.timeline {
    appearance: none;
    display: block;
    width: 100%;
    height: 6px;
    margin-bottom: 8px;
    border: solid #7fa9cd;
    border-width: 0 1px;
    background: linear-gradient(#7fa9cd, #7fa9cd) 0 2px / 100% 2px no-repeat;
}
.timeline::-webkit-slider-thumb {
    appearance: none;
    width: 8px;
    height: 8px;
    border-radius: 50%;
    background-color: #b4d0e8;
}
.player-buttons {
    display: flex;
    justify-content: center;
    align-items: center;
    gap: 16px;
    padding-right: 97px;
    color: #8fb4d8;
    font: 11px "Liberation Sans", Arial, sans-serif;
}
.pill {
    height: 17px;
    border: 2px solid #6f9fcb;
    border-radius: 9px;
    line-height: 12px;
}
.pill-name {
    width: 181px;
    margin-right: 1px;
}
.pill-speed {
    width: 39px;
}
.round svg {
    width: 18px;
    height: 18px;
    stroke: #86afd6;
    stroke-width: 1.5;
}
.play {
    margin: 0 -3px;
}
.play svg {
    width: 24px;
    height: 24px;
}
.faded svg {
    stroke: #3d6c98;
}
.frame {
    margin-left: 9px;
}
.brand {
    display: flex;
    align-items: flex-end;
    justify-content: flex-end;
    padding: 0 13px 12px 0;
    color: #7399bf;
    font: bold 20px/30px Lato, sans-serif;
}
.brand svg {
    width: 28px;
    height: 30px;
    margin: 0 -9px 8px 0;
    fill: #638db8;
}

/* input method bar */
.ime {
    position: absolute;
    right: 0;
    bottom: 31px;
    width: 165px;
    z-index: 2;
}
.ime-keys {
    position: absolute;
    left: 22px;
    top: 5px;
    display: grid;
    grid-template-columns: 19px 19px;
    line-height: 19px;
    font-size: 14px;
    color: #fff;
}

/* taskbar */
.taskbar {
    height: 31px;
    display: flex;
    gap: 4px;
    padding-left: 5px;
    background-color: #1c1c1c;
}
.task {
    width: 31px;
    display: grid;
    place-items: center;
    border-bottom: 2px solid #76a9d8;
}
.task.active {
    width: 36px;
    background-color: #4a4a4a;
}
.task svg {
    width: 18px;
    height: 18px;
}
.task-letter {
    fill: #111;
    font: bold 13px "Liberation Sans", sans-serif;
    text-anchor: middle;
}
.tray {
    margin-left: auto;
    display: flex;
    align-items: center;
    gap: 4px;
    margin-right: 2px;
    padding-right: 9px;
    border-right: 1px solid #555;
    color: #fff;
}
.tray svg {
    width: 14px;
    height: 14px;
}
.tray-letter {
    fill: #fff;
    font: bold 10px "Liberation Sans", sans-serif;
    text-anchor: middle;
}
.lang {
    width: 16px;
    font-size: 11px;
}
.clock {
    width: 62px;
    display: flex;
    flex-direction: column;
    align-items: center;
    line-height: 14px;
}
.tray .notice {
    position: relative;
}
.tray .notice svg {
    width: 20px;
    height: 20px;
}
.notice span {
    position: absolute;
    right: -2px;
    bottom: -3px;
    width: 12px;
    height: 12px;
    border: 1px solid #999;
    border-radius: 50%;
    background-color: #333;
    line-height: 10px;
}
```
